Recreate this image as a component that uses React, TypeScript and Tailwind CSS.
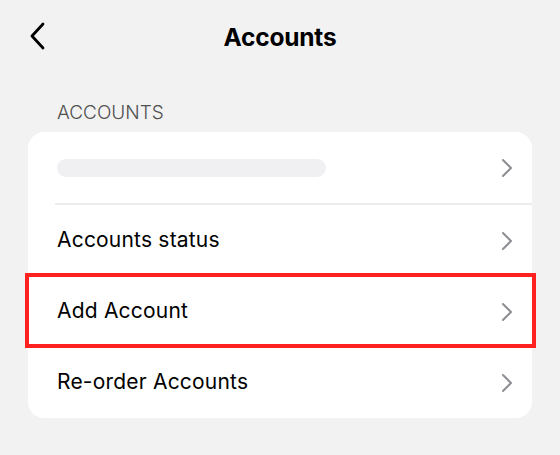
import React from 'react';

// Settings-style accounts screen
const rows = [
  { id: 'placeholder', label: '' },
  { id: 'status', label: 'Accounts status' },
  { id: 'add', label: 'Add Account', highlighted: true },
  { id: 'reorder', label: 'Re-order Accounts' },
];

function Chevron() {
  return (
    <svg width="12" height="20" viewBox="0 0 12 20" fill="none" className="shrink-0">
      <path d="M2 2 L10 10 L2 18" stroke="#8e8e93" strokeWidth="2" strokeLinecap="round" strokeLinejoin="round" />
    </svg>
  );
}

const App: React.FC = () => {
  return (
    <div className="w-[560px] h-[455px] bg-[#f2f2f2] font-['Inter',sans-serif] text-black overflow-hidden">
      {/* Header */}
      <div className="relative h-[74px] flex items-center justify-center">
        <button className="absolute left-[28px] top-[22px]">
          <svg width="20" height="28" viewBox="0 0 20 28" fill="none">
            <path d="M15 2 L4 14 L15 26" stroke="#000" strokeWidth="2.8" strokeLinecap="round" strokeLinejoin="round" />
          </svg>
        </button>
        <h1 className="text-[24.5px] font-bold tracking-[-0.2px]">Accounts</h1>
      </div>

      <div className="pl-[57px] pt-[29px] pb-[10px] text-[19px] font-light text-[#4f4f4f] leading-none">ACCOUNTS</div>

      <div className="mx-[28px] bg-white rounded-[16px]">
        {rows.map((r, i) => (
          <div key={r.id} className="relative">
            <div className="h-[71px] flex items-center pl-[29px] pr-[19px]">
              <div className="flex-1">
                {r.label ? (
                  <span className="text-[21px] tracking-[0.2px] leading-none">{r.label}</span>
                ) : (
                  <div className="w-[269px] h-[18px] rounded-full bg-[#f0f0f2]" />
                )}
              </div>
              <Chevron />
            </div>
            {i === 0 && <div className="ml-[27px] h-[2px] bg-[#ececec]" />}
            {r.highlighted && (
              <div className="absolute -left-[3px] -right-[4px] -top-[3px] -bottom-[1px] border-4 border-[#ff2020] pointer-events-none" />
            )}
          </div>
        ))}
      </div>
    </div>
  );
};

export default App;
